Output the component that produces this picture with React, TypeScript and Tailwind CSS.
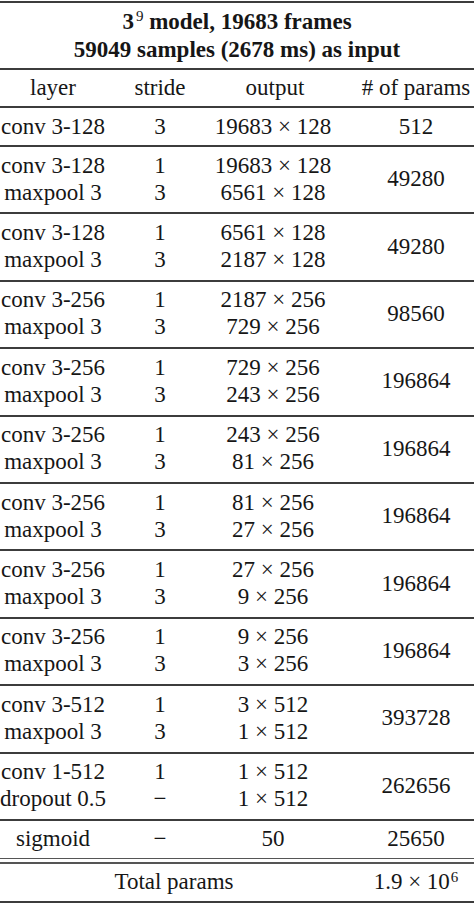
import React from "react";

type Row = {
  layer: [string, string];
  stride: [string, string];
  output: [string, string];
  params: string;
};

const rows: Row[] = [
  { layer: ["conv 3-128", "maxpool 3"], stride: ["1", "3"], output: ["19683 × 128", "6561 × 128"], params: "49280" },
  { layer: ["conv 3-128", "maxpool 3"], stride: ["1", "3"], output: ["6561 × 128", "2187 × 128"], params: "49280" },
  { layer: ["conv 3-256", "maxpool 3"], stride: ["1", "3"], output: ["2187 × 256", "729 × 256"], params: "98560" },
  { layer: ["conv 3-256", "maxpool 3"], stride: ["1", "3"], output: ["729 × 256", "243 × 256"], params: "196864" },
  { layer: ["conv 3-256", "maxpool 3"], stride: ["1", "3"], output: ["243 × 256", "81 × 256"], params: "196864" },
  { layer: ["conv 3-256", "maxpool 3"], stride: ["1", "3"], output: ["81 × 256", "27 × 256"], params: "196864" },
  { layer: ["conv 3-256", "maxpool 3"], stride: ["1", "3"], output: ["27 × 256", "9 × 256"], params: "196864" },
  { layer: ["conv 3-256", "maxpool 3"], stride: ["1", "3"], output: ["9 × 256", "3 × 256"], params: "196864" },
  { layer: ["conv 3-512", "maxpool 3"], stride: ["1", "3"], output: ["3 × 512", "1 × 512"], params: "393728" },
  { layer: ["conv 1-512", "dropout 0.5"], stride: ["1", "−"], output: ["1 × 512", "1 × 512"], params: "262656" },
];

const grid = "grid grid-cols-[106px_108px_144px_116px] items-center text-center whitespace-nowrap";

function Rule() {
  return <div className="h-[2px] bg-[#3c3c3c]" />;
}

function SingleRow({ cells }: { cells: string[] }) {
  return (
    <div className={`${grid} h-[37px] leading-[28px]`}>
      <div>{cells[0]}</div>
      <div>{cells[1]}</div>
      <div className="pr-[26px]">{cells[2]}</div>
      <div>{cells[3]}</div>
    </div>
  );
}

function DoubleRow({ row }: { row: Row }) {
  return (
    <div className={`${grid} h-[65.4px] leading-[27px] pb-[2px]`}>
      <div className="flex flex-col">
        <span>{row.layer[0]}</span>
        <span>{row.layer[1]}</span>
      </div>
      <div className="flex flex-col">
        <span>{row.stride[0]}</span>
        <span>{row.stride[1]}</span>
      </div>
      <div className="flex flex-col pr-[26px]">
        <span>{row.output[0]}</span>
        <span>{row.output[1]}</span>
      </div>
      <div>{row.params}</div>
    </div>
  );
}

export default function App() {
  return (
    <div className="w-[474px] h-[909px] bg-white text-[#161616] text-[23px] font-['Liberation_Serif',serif] overflow-hidden">
      <div className="h-[1px]" />
      <Rule />
      <div className="h-[65px] flex flex-col items-center justify-center font-bold leading-[28.5px] pt-[1px]">
        <div>
          3<sup className="text-[15px] font-normal ml-[2px]">9</sup> model, 19683 frames
        </div>
        <div>59049 samples (2678 ms) as input</div>
      </div>
      <Rule />
      <div className={`${grid} h-[36px] leading-[28px]`}>
        <div>layer</div>
        <div>stride</div>
        <div className="pr-[22px]">output</div>
        <div># of params</div>
      </div>
      <Rule />
      <SingleRow cells={["conv 3-128", "3", "19683 × 128", "512"]} />
      <Rule />
      {rows.map((row, i) => (
        <React.Fragment key={i}>
          <DoubleRow row={row} />
          <Rule />
        </React.Fragment>
      ))}
      <SingleRow cells={["sigmoid", "−", "50", "25650"]} />
      <div className="h-[1.5px] bg-[#555]" />
      <div className="h-[3px]" />
      <div className="h-[1.5px] bg-[#555]" />
      <div className="grid grid-cols-[358px_116px] items-center text-center h-[37px] leading-[28px] whitespace-nowrap">
        <div className="pr-[10px]">Total params</div>
        <div>
          1.9 × 10<sup className="text-[15px] ml-[1px]">6</sup>
        </div>
      </div>
      <Rule />
    </div>
  );
}
